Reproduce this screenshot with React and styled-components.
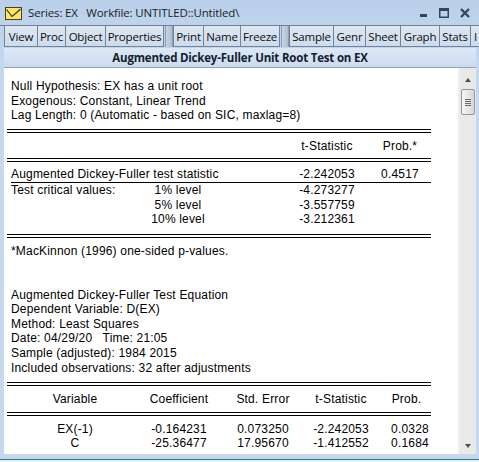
import React from "react";
import styled, { createGlobalStyle } from "styled-components";

const GlobalStyle = createGlobalStyle`
  html, body {
    margin: 0;
    padding: 0;
    background: #c6d8ee;
  }
`;

const toolButtons = [
  ["View", 34], ["Proc", 29], ["Object", 41], ["Properties", 59], "sep",
  ["Print", 31], ["Name", 38], ["Freeze", 40], "sep",
  ["Sample", 45], ["Genr", 33], ["Sheet", 36], ["Graph", 40], ["Stats", 32], ["I", 40],
];

const App = () => {
  return (
    <>
      <GlobalStyle />
      <Window>
        <TitleBar>
          <SeriesIcon width="17" height="13" viewBox="0 0 17 13">
            <rect x="0.5" y="0.5" width="16" height="12" fill="#ffe46a" stroke="#4b4020" />
            <polyline points="1.5,2.5 7,9.5 10.5,6.5 15.5,2" fill="none" stroke="#3a3220" strokeWidth="1.2" />
          </SeriesIcon>
          <TitleText>Series: EX   Workfile: UNTITLED::Untitled\</TitleText>
          <Controls>
            <svg width="8" height="4" viewBox="0 0 8 4">
              <rect x="0" y="0" width="7" height="3" fill="#34455c" />
            </svg>
            <svg width="10" height="10" viewBox="0 0 10 10">
              <rect x="0.75" y="0.75" width="8.5" height="8.5" fill="none" stroke="#34455c" strokeWidth="1.5" />
              <rect x="0" y="0" width="10" height="3" fill="#34455c" />
            </svg>
            <svg width="10" height="10" viewBox="0 0 10 10">
              <path d="M1 1 L9 9 M9 1 L1 9" stroke="#34455c" strokeWidth="2.4" />
            </svg>
          </Controls>
        </TitleBar>

        <Toolbar>
          {toolButtons.map((b, i) =>
            b === "sep" ? (
              <Separator key={i} />
            ) : (
              <ToolButton key={i} $w={b[1]} $left={b[0] === "I"}>{b[0]}</ToolButton>
            )
          )}
        </Toolbar>

        <Heading>Augmented Dickey-Fuller Unit Root Test on EX</Heading>

        <Main>
          <Content>
            <Report>
              <Line>Null Hypothesis: EX has a unit root</Line>
              <Line>Exogenous: Constant, Linear Trend</Line>
              <Line>Lag Length: 0 (Automatic - based on SIC, maxlag=8)</Line>

              <DoubleRule $before={6} $after={6} />
              <Row>
                <Cell $w={280} />
                <Cell $w={80} $center>t-Statistic</Cell>
                <Cell $w={66} $center>Prob.*</Cell>
              </Row>
              <DoubleRule $before={5} $after={5} />
              <Row>
                <Cell $w={280} $label>Augmented Dickey-Fuller test statistic</Cell>
                <Cell $w={80} $center>-2.242053</Cell>
                <Cell $w={66} $center>0.4517</Cell>
              </Row>
              <Rule />
              {[
                ["Test critical values:", "1% level", "-4.273277"],
                ["", "5% level", "-3.557759"],
                ["", "10% level", "-3.212361"],
              ].map((r, i) => (
                <Row key={i}>
                  <Cell $w={136} $label>{r[0]}</Cell>
                  <Cell $w={70} $center>{r[1]}</Cell>
                  <Cell $w={74} />
                  <Cell $w={80} $center>{r[2]}</Cell>
                </Row>
              ))}
              <DoubleRule $before={7} $after={6} />
              <Line>*MacKinnon (1996) one-sided p-values.</Line>
              <Line />
              <Line />
              <Line>Augmented Dickey-Fuller Test Equation</Line>
              <Line>Dependent Variable: D(EX)</Line>
              <Line>Method: Least Squares</Line>
              <Line>Date: 04/29/20   Time: 21:05</Line>
              <Line>Sample (adjusted): 1984 2015</Line>
              <Line>Included observations: 32 after adjustments</Line>

              <DoubleRule $before={7} $after={6} />
              <Row>
                <Cell $w={136} $center>Variable</Cell>
                <Cell $w={72} $center>Coefficient</Cell>
                <Cell $w={96} $center>Std. Error</Cell>
                <Cell $w={60} $center>t-Statistic</Cell>
                <Cell $w={18} />
                <Cell $w={42} $center>Prob.  </Cell>
              </Row>
              <DoubleRule $before={5} $after={6} />
              {[
                ["EX(-1)", "-0.164231", "0.073250", "-2.242053", "0.0328"],
                ["C", "-25.36477", "17.95670", "-1.412552", "0.1684"],
              ].map((r, i) => (
                <Row key={i}>
                  <Cell $w={136} $center>{r[0]}</Cell>
                  <Cell $w={72} $center>{r[1]}</Cell>
                  <Cell $w={96} $center>{r[2]}</Cell>
                  <Cell $w={60} $center>{r[3]}</Cell>
                  <Cell $w={18} />
                  <Cell $w={42} $center>{r[4]}</Cell>
                </Row>
              ))}
            </Report>
          </Content>

          <Scrollbar>
            <Arrow $up />
            <Thumb>
              <Grip />
              <Grip />
              <Grip />
              <Grip />
            </Thumb>
            <Track />
            <Arrow />
          </Scrollbar>
        </Main>

        <BottomFrame />
      </Window>
    </>
  );
};

const Window = styled.div`
  width: 479px;
  height: 462px;
  display: flex;
  flex-direction: column;
  overflow: hidden;
  background: linear-gradient(#bad0ea, #c5d8ee 70px, #c6d8ee);
`;

const TitleBar = styled.div`
  height: 25px;
  flex: none;
  display: flex;
  align-items: center;
  padding-left: 5px;
  font-family: "Open Sans", "Noto Sans", sans-serif;
  font-size: 11.5px;
  color: #1c1c1c;
`;

const SeriesIcon = styled.svg`
  flex: none;
  margin-top: 1px;
`;

const TitleText = styled.span`
  white-space: pre;
  margin-left: 6px;
  letter-spacing: -0.15px;
`;

const Controls = styled.div`
  margin-left: auto;
  margin-right: 9px;
  display: flex;
  align-items: center;
  gap: 11px;

  svg:first-child {
    margin-top: 6px;
  }
`;

const Toolbar = styled.div`
  height: 21px;
  flex: none;
  display: flex;
  padding-left: 4px;
  border-top: 1px solid #6f7f95;
  overflow: hidden;
`;

const ToolButton = styled.div`
  flex: none;
  box-sizing: border-box;
  width: ${(p) => p.$w}px;
  height: 21px;
  margin-left: -1px;
  padding-left: ${(p) => (p.$left ? "3px" : "0")};
  border: 1px solid #72849c;
  border-top: none;
  background: linear-gradient(#dfe8f3, #cddbec);
  display: flex;
  align-items: center;
  justify-content: ${(p) => (p.$left ? "flex-start" : "center")};
  font-family: "Open Sans", "Noto Sans", sans-serif;
  font-size: 11.5px;
  letter-spacing: -0.2px;
  color: #0d0d0d;
  white-space: nowrap;

  &:first-child {
    margin-left: 0;
  }
`;

const Separator = styled.div`
  flex: none;
  box-sizing: border-box;
  width: 8px;
  height: 21px;
  margin: 0 1px;
  border-left: 1px solid #8a9bb2;
  border-right: 1px solid #8a9bb2;
  background: linear-gradient(90deg, #c9d6e6, #aebccf);
`;

const Heading = styled.div`
  height: 19px;
  flex: none;
  margin: 1px 3px 0 4px;
  border-bottom: 1px solid #8fa4c0;
  background: linear-gradient(#dde8f5, #cbdbef);
  display: flex;
  align-items: center;
  justify-content: center;
  font-family: "Open Sans", "Noto Sans", sans-serif;
  font-weight: 700;
  font-size: 11.5px;
  letter-spacing: -0.2px;
  color: #15202e;
`;

const Main = styled.div`
  flex: 1;
  display: flex;
  margin: 0 3px 0 4px;
  min-height: 0;
`;

const Content = styled.div`
  flex: 1;
  background: #fff;
  overflow: hidden;
`;

const Report = styled.div`
  width: 424px;
  margin-left: 3px;
  padding-top: 11px;
  font-family: "Liberation Sans", Arial, sans-serif;
  font-size: 12px;
  letter-spacing: 0.18px;
  line-height: 14.6px;
  color: #000;
`;

const Line = styled.div`
  height: 14.6px;
  padding-left: 4px;
  white-space: pre;
`;

const DoubleRule = styled.div`
  height: 2px;
  border-top: 1px solid #000;
  border-bottom: 1px solid #000;
  margin: ${(p) => p.$before}px 0 ${(p) => p.$after}px;
`;

const Rule = styled.div`
  height: 1px;
  margin-left: 4px;
  background: #000;
`;

const Row = styled.div`
  display: flex;
  height: 14.6px;
`;

const Cell = styled.div`
  flex: none;
  width: ${(p) => p.$w}px;
  white-space: pre;
  padding-left: ${(p) => (p.$label ? "4px" : "0")};
  box-sizing: border-box;
  display: flex;
  justify-content: ${(p) => (p.$center ? "center" : "flex-start")};
`;

const Scrollbar = styled.div`
  width: 17px;
  flex: none;
  background: #e9e9e9;
  border-left: 1px solid #f2f2f2;
  display: flex;
  flex-direction: column;
  align-items: center;
`;

const Arrow = styled.div`
  width: 0;
  height: 0;
  margin: ${(p) => (p.$up ? "10px 0 7px" : "0 0 6px")};
  border-left: 3.5px solid transparent;
  border-right: 3.5px solid transparent;
  ${(p) =>
    p.$up ? "border-bottom: 4px solid #505050;" : "border-top: 4px solid #505050;"}
`;

const Thumb = styled.div`
  box-sizing: border-box;
  width: 14px;
  height: 26px;
  margin-left: 1px;
  border: 1px solid #979797;
  border-radius: 2px;
  background: linear-gradient(90deg, #f6f6f6, #e4e4e4 60%, #d6d6d6);
  display: flex;
  flex-direction: column;
  align-items: center;
  justify-content: center;
  gap: 1px;
`;

const Grip = styled.div`
  width: 6px;
  height: 1px;
  background: #6b6b6b;
`;

const Track = styled.div`
  flex: 1;
`;

const BottomFrame = styled.div`
  height: 8px;
  flex: none;
  box-sizing: border-box;
  border-bottom: 2px solid #dff0f2;
  background: linear-gradient(#c6d8ee 0, #c6d8ee 5px, #2f7884 5px, #2f7884 6px);
`;

export default App;
